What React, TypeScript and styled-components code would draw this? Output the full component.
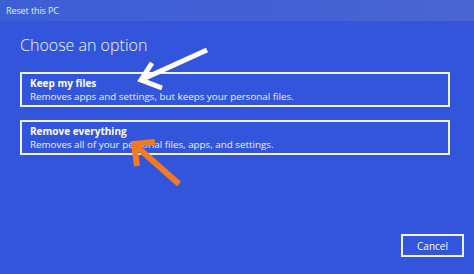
import React from 'react';
import styled, { createGlobalStyle } from 'styled-components';

const GlobalStyle = createGlobalStyle`
  html, body {
    margin: 0;
    padding: 0;
    background: #3255dc;
  }
  body {
    font-family: "Open Sans", "Noto Sans", "Liberation Sans", sans-serif;
  }
`;

const Screen = styled.div`
  position: relative;
  width: 474px;
  height: 274px;
  background: #3255dc;
  color: #ffffff;
  display: flex;
  flex-direction: column;
  overflow: hidden;
`;

const TitleBar = styled.div`
  height: 21px;
  padding-left: 6px;
  display: flex;
  align-items: center;
  background: linear-gradient(90deg, #3d5fd6 0%, #4462d4 70%, #4b66d2 100%);
  font-size: 9px;
  color: #e8ecfb;
  letter-spacing: -0.1px;
`;

const Body = styled.div`
  flex: 1;
  display: flex;
  flex-direction: column;
  padding: 12px 10px 17px 20px;
`;

const Heading = styled.h1`
  margin: 0 0 15px;
  font-size: 16px;
  font-weight: 300;
  line-height: 24px;
  color: #f4f6ff;
`;

const Options = styled.div`
  display: flex;
  flex-direction: column;
  gap: 13px;
  margin-right: 14px;
`;

const OptionCard = styled.div`
  height: 35px;
  box-sizing: border-box;
  border: 2px solid #eef1ff;
  padding: 0 8px;
  display: flex;
  flex-direction: column;
  justify-content: center;
`;

const OptionTitle = styled.div`
  font-size: 10px;
  font-weight: 700;
  line-height: 14px;
`;

const OptionText = styled.div`
  font-size: 9.8px;
  line-height: 14px;
  color: #eef1ff;
`;

const Footer = styled.div`
  margin-top: auto;
  display: flex;
  justify-content: flex-end;
`;

const CancelButton = styled.button`
  width: 63px;
  height: 23px;
  background: transparent;
  border: 2px solid #eef1ff;
  color: #ffffff;
  font-family: inherit;
  font-size: 10px;
  padding: 0;
`;

const Overlay = styled.svg`
  position: absolute;
  left: 0;
  top: 0;
  pointer-events: none;
`;

const App: React.FC = () => {
  return (
    <Screen>
      <GlobalStyle />
      <TitleBar>Reset this PC</TitleBar>
      <Body>
        <Heading>Choose an option</Heading>
        <Options>
          <OptionCard>
            <OptionTitle>Keep my files</OptionTitle>
            <OptionText>Removes apps and settings, but keeps your personal files.</OptionText>
          </OptionCard>
          <OptionCard>
            <OptionTitle>Remove everything</OptionTitle>
            <OptionText>Removes all of your personal files, apps, and settings.</OptionText>
          </OptionCard>
        </Options>
        <Footer>
          <CancelButton>Cancel</CancelButton>
        </Footer>
      </Body>
      <Overlay width="474" height="274" viewBox="0 0 474 274">
        {/* white arrow pointing at Keep my files */}
        <g stroke="#ffffff" strokeWidth={5} fill="none" strokeLinecap="butt" strokeLinejoin="miter">
          <line x1="207" y1="50" x2="143" y2="79" />
          <polyline points="152,63 141,80 162,88" />
        </g>
        {/* orange arrow pointing at Remove everything */}
        <g stroke="#f47a1f" strokeWidth={6} fill="none" strokeLinecap="butt" strokeLinejoin="miter">
          <line x1="179" y1="184" x2="136" y2="146" />
          <polyline points="155,142 134,144 137,166" />
        </g>
      </Overlay>
    </Screen>
  );
};

export default App;
